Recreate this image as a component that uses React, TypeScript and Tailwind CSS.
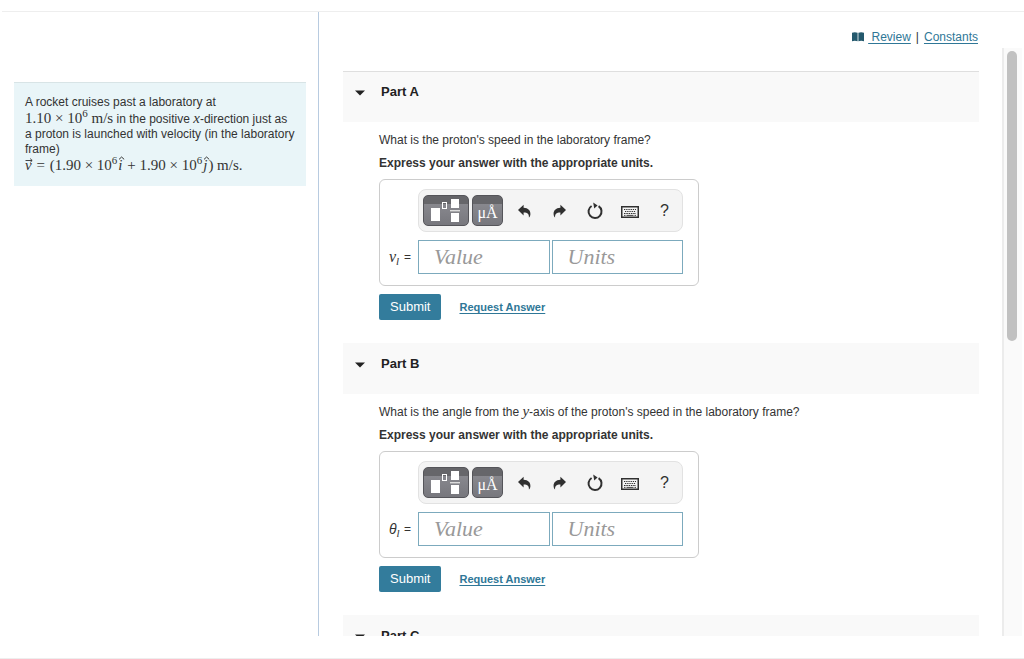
import { useState } from "react";
import type { ReactNode } from "react";

interface Part {
  id: string;
  title: string;
  question: ReactNode;
  symbol: string;
  symbolClass: string;
}

const parts: Part[] = [
  {
    id: "a",
    title: "Part A",
    question: "What is the proton's speed in the laboratory frame?",
    symbol: "v",
    symbolClass: "font-['Liberation_Serif',serif] text-base",
  },
  {
    id: "b",
    title: "Part B",
    question: (
      <>
        What is the angle from the <MathVar>y</MathVar>-axis of the proton's speed in the laboratory frame?
      </>
    ),
    symbol: "θ",
    symbolClass: "text-sm",
  },
  {
    id: "c",
    title: "Part C",
    question: "",
    symbol: "v",
    symbolClass: "font-['Liberation_Serif',serif] text-base",
  },
];

function MathVar({ children }: { children: ReactNode }) {
  return <i className="font-['Liberation_Serif',serif] text-[15px] leading-none">{children}</i>;
}

function Power() {
  return <sup className="top-[-6px] text-[11px]">6</sup>;
}

function Hat({ children }: { children: ReactNode }) {
  return (
    <span className="relative inline-block px-px">
      <i>{children}</i>
      <svg className="absolute -top-px left-px" width="7" height="4" viewBox="0 0 7 4" fill="none" stroke="currentColor">
        <path d="M1 3.4 3.6 1 6.2 3.4" />
      </svg>
    </span>
  );
}

function Vector({ children }: { children: ReactNode }) {
  return (
    <span className="relative inline-block">
      <i>{children}</i>
      <svg className="absolute top-px left-0" width="8" height="5" viewBox="0 0 8 5" fill="none" stroke="currentColor" strokeWidth="0.9">
        <path d="M0.5 2.5H7M5.2 0.6 7.2 2.5 5.2 4.4" />
      </svg>
    </span>
  );
}

function BookIcon() {
  return (
    <svg width="12" height="10" viewBox="0 0 12 10" fill="#24596d">
      <path d="M0 .7Q2.8 0 5.6.7V9.2Q2.8 8.5 0 9.2ZM6.4.7Q9.2 0 12 .7V9.2Q9.2 8.5 6.4 9.2Z" />
    </svg>
  );
}

function TemplateIcon() {
  return (
    <svg width="30" height="26" viewBox="0 0 30 26" fill="#fff">
      <rect x="0" y="10" width="9" height="13" />
      <rect x="11.5" y="4.5" width="4" height="6" fill="none" stroke="#fff" />
      <rect x="20" y="1" width="8" height="9" />
      <rect x="19" y="12" width="10" height="1.4" fill="#dcdcdc" />
      <rect x="20" y="15" width="8" height="9" />
    </svg>
  );
}

function UndoIcon() {
  return (
    <svg width="13" height="14" viewBox="0 0 13 14" fill="#303030">
      <path d="M5.6 0.8V3.8C10.2 4 12.6 6.6 12.4 10.2 12.3 11.5 11.8 12.8 10.9 13.6 11.2 10.2 9.8 8.4 5.6 8.4V11.4L0 6.1Z" />
    </svg>
  );
}

function RedoIcon() {
  return (
    <svg width="13" height="14" viewBox="0 0 13 14" fill="#303030">
      <path d="M7.4 0.8V3.8C2.8 4 .4 6.6.6 10.2.7 11.5 1.2 12.8 2.1 13.6 1.8 10.2 3.2 8.4 7.4 8.4V11.4L13 6.1Z" />
    </svg>
  );
}

function ResetIcon() {
  return (
    <svg width="16" height="18" viewBox="0 0 16 18" fill="none" stroke="#303030" strokeWidth="2">
      <path d="M4.6 4A6.5 6.5 0 1 0 11.6 4.1" />
      <path d="M6.2.6 10.6 3.4 7.2 6.6Z" fill="#303030" stroke="none" />
    </svg>
  );
}

function KeyboardIcon() {
  return (
    <svg width="18" height="12" viewBox="0 0 18 12" fill="none" stroke="#303030">
      <rect x="0.75" y="0.75" width="16.5" height="10.5" strokeWidth="1.5" />
      <path d="M3 3.5H15M4 5.5H15" strokeDasharray="1.3 0.9" strokeWidth="1.2" />
      <path d="M3 7.5H15" strokeDasharray="1.5 0.8" strokeWidth="1.2" />
      <path d="M3 9.4H4.5M5.5 9.4H12.5M13.5 9.4H15" strokeWidth="0.9" />
    </svg>
  );
}

const darkButton =
  "flex h-[31px] items-center justify-center rounded-[5px] border border-[#55555a] bg-linear-to-b from-[#66666a] from-28% via-[#88888e] via-28% to-[#77777d] text-white";
const plainButton = "flex h-8 w-[35px] items-center justify-center";
const fieldClass =
  "h-[34px] min-w-0 flex-1 border border-[#7caabd] bg-white px-[15px] font-['Liberation_Serif',serif] text-[22px] text-[#333] placeholder:text-[#999] placeholder:italic";

function Toolbar() {
  return (
    <div className="flex h-[43px] items-center rounded-lg border border-[#e2e2e2] bg-[#f4f4f4] pl-1">
      <button type="button" aria-label="Templates" className={`${darkButton} w-[46px]`}>
        <TemplateIcon />
      </button>
      <button
        type="button"
        aria-label="Units"
        className={`${darkButton} ml-[3px] w-[31px] pt-1 font-['Liberation_Serif',serif] text-base leading-none`}
      >
        μÅ
      </button>
      <div className="ml-1 flex">
        <button type="button" aria-label="Undo" className={plainButton}>
          <UndoIcon />
        </button>
        <button type="button" aria-label="Redo" className={plainButton}>
          <RedoIcon />
        </button>
        <button type="button" aria-label="Reset" className={plainButton}>
          <ResetIcon />
        </button>
        <button type="button" aria-label="Keyboard shortcuts" className={`${plainButton} pt-[3px]`}>
          <KeyboardIcon />
        </button>
        <button type="button" aria-label="Help" className={`${plainButton} text-base text-[#303030]`}>
          ?
        </button>
      </div>
    </div>
  );
}

function PartSection({ part }: { part: Part }) {
  // the last part starts folded
  const [open, setOpen] = useState(part.question !== "");
  const first = part.id === "a";

  return (
    <section>
      <h2 className={`border-t bg-[#f9f9f9] ${first ? "border-[#dfdfdf]" : "border-[#f9f9f9]"}`}>
        <button
          type="button"
          aria-expanded={open}
          onClick={() => setOpen(!open)}
          className="flex h-[50px] w-full items-start gap-4 px-3 pt-3 text-left text-[13px] leading-4 font-bold text-[#222]"
        >
          <svg className="mt-1.5" width="10" height="6" viewBox="0 0 10 6" fill="#222">
            <path d="M0 0.5H10L5 5.5Z" />
          </svg>
          {part.title}
        </button>
      </h2>

      {open && (
        <div className="pt-2.5 pb-[23px] pl-9">
          <p className="leading-4">{part.question}</p>
          <p className="mt-[7px] leading-4 font-bold">Express your answer with the appropriate units.</p>

          {/* ANSWER BOX */}
          <div className="mt-2 flex w-80 max-w-full items-end rounded-md border border-[#ccc] pt-[9px] pr-[15px] pb-[11px]">
            <div className="flex h-[34px] w-[38px] shrink-0 items-center justify-between pr-[7px] pl-[9px] whitespace-nowrap">
              <span>
                <i className={part.symbolClass}>{part.symbol}</i>
                <sub className="font-['Liberation_Serif',serif] text-[11px] italic">l</sub>
              </span>
              <span>=</span>
            </div>
            <div className="min-w-0 flex-1">
              <Toolbar />
              <div className="mt-2 flex gap-[2px]">
                <input type="text" placeholder="Value" aria-label={`${part.title} value`} className={fieldClass} />
                <input type="text" placeholder="Units" aria-label={`${part.title} units`} className={fieldClass} />
              </div>
            </div>
          </div>

          <div className="mt-2 flex items-center gap-[18px]">
            <button type="button" className="h-[26px] rounded-xs bg-[#337c9c] px-[11px] text-[13px] text-white">
              Submit
            </button>
            <a href="#request" className="text-[11px] leading-4 font-bold text-[#2f7797] underline underline-offset-2">
              Request Answer
            </a>
          </div>
        </div>
      )}
    </section>
  );
}

export default function App() {
  return (
    <div className="flex h-screen flex-col bg-white pt-[11px] font-['Liberation_Sans',Arial,sans-serif] text-xs text-[#333]">
      <div className="ml-0.5 flex min-h-0 flex-1 border-t border-[#eee]">
        {/* PROBLEM */}
        <aside className="w-[317px] shrink-0 border-r border-[#b8cbe0] px-3 pt-[70px]">
          <div className="border-t border-[#d8e4e6] bg-[#e9f5f8] py-3 pr-2.5 pl-[11px] leading-[15px]">
            <p>
              A rocket cruises past a laboratory at
              <br />
              <span className="font-['Liberation_Serif',serif] text-[15px] leading-[17px]">
                1.10 × 10
                <Power /> m/s
              </span>{" "}
              in the positive <MathVar>x</MathVar>-direction just as a proton is launched with velocity (in the laboratory frame)
            </p>
            <p className="font-['Liberation_Serif',serif] text-[15px] leading-[17px]">
              <Vector>v</Vector> <span className="px-px">=</span> (1.90 × 10
              <Power />
              <Hat>i</Hat> + 1.90 × 10
              <Power />
              <Hat>j</Hat>) m/s.
            </p>
          </div>
        </aside>

        {/* QUESTIONS */}
        <main className="flex min-w-0 flex-1 flex-col">
          <nav className="flex h-9 shrink-0 items-end justify-end pr-[46px] pb-[3px] leading-4 text-[#2f7797]">
            <a href="#review" className="flex items-center gap-1">
              <BookIcon />
              <span className="whitespace-pre underline underline-offset-2"> Review</span>
            </a>
            <span className="px-[5px] text-[#333]">|</span>
            <a href="#constants" className="underline underline-offset-2">
              Constants
            </a>
          </nav>
          <div className="flex min-h-0 flex-1">
            <div className="min-w-0 flex-1 overflow-hidden pt-[23px] pr-[23px] pl-6">
              {parts.map((part) => (
                <PartSection key={part.id} part={part} />
              ))}
            </div>
            <div className="mr-0.5 w-5 shrink-0 border-l-2 border-[#ececec] bg-[#fafafa] pt-[3px] pl-[3px]">
              <div className="h-[calc(50%-3px)] w-2.5 rounded-full bg-[#c1c1c1]" />
            </div>
          </div>
        </main>
      </div>
      <footer className="h-[23px] shrink-0 border-b border-[#eee]" />
    </div>
  );
}
